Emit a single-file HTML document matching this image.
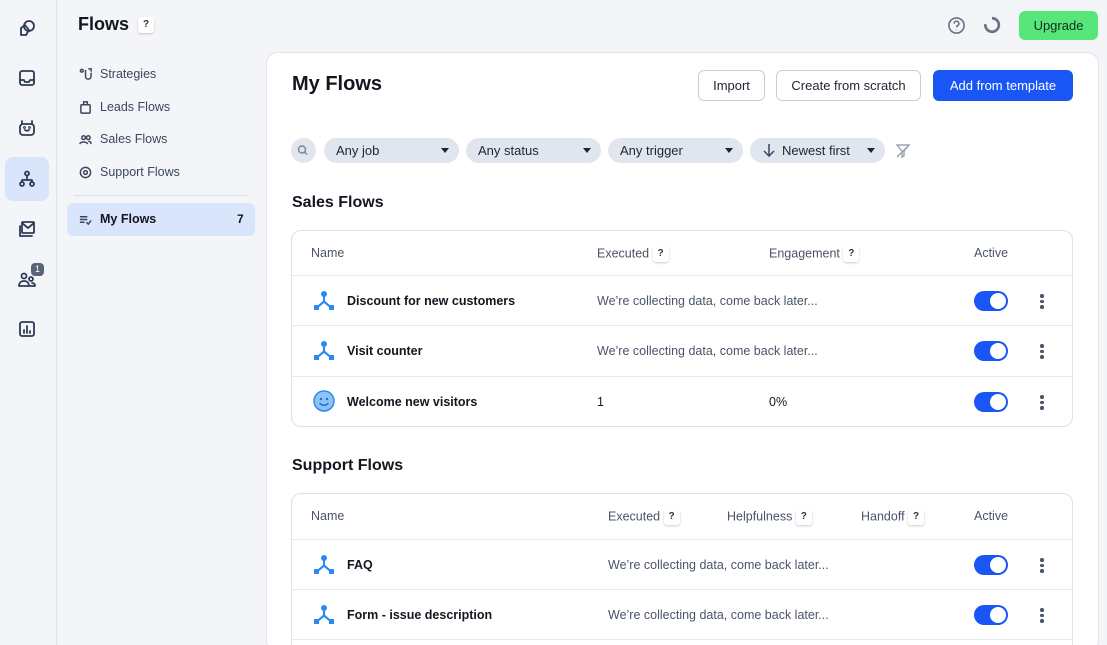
<!DOCTYPE html>
<html><head><meta charset="utf-8"><style>
*{box-sizing:border-box;margin:0;padding:0}
html,body{width:1107px;height:645px;overflow:hidden}
body{background:#f3f5f9;font-family:"Liberation Sans",sans-serif;color:#14161f;position:relative}
.rail{position:absolute;left:0;top:0;width:57px;height:645px;border-right:1px solid #dfe3ea;background:#f3f5f9}
.ri{position:absolute;left:5px;width:44px;height:44px;border-radius:8px;display:flex;align-items:center;justify-content:center}
.ri svg{width:20px;height:20px;fill:none;stroke:#2e3a55;stroke-width:1.8;stroke-linecap:round;stroke-linejoin:round}
.abs{position:absolute}
.q{display:inline-block;width:16px;height:16px;border-radius:3px;background:#fff;box-shadow:0 1px 2px rgba(0,0,0,.2);font-size:10px;text-align:center;line-height:16px;color:#333;font-weight:bold;vertical-align:middle}
.nav{position:absolute;left:79px;font-size:12.5px;color:#3c4660;display:flex;align-items:center;gap:8px}
.nav svg{width:13px;height:13px;fill:none;stroke:#3c4660;stroke-width:1.6}
.card{position:absolute;left:266px;top:52px;width:833px;height:600px;background:#fff;border:1px solid #e1e5ec;border-radius:12px}
.btn{position:absolute;top:70px;height:31px;border:1px solid #c9ced8;border-radius:6px;background:#fff;font-size:13px;line-height:29px;text-align:center;color:#1e2433}
.pill{position:absolute;top:138px;height:25px;border-radius:13px;background:#e1e6ee;font-size:13px;line-height:25px;color:#1e2433;padding-left:12px}
.pill:after{content:"";position:absolute;right:10px;top:10px;border-left:4.5px solid transparent;border-right:4.5px solid transparent;border-top:5px solid #1e2433}
.tbl{position:absolute;left:291px;width:782px;border:1px solid #dde1e8;border-radius:10px}
.th{position:absolute;font-size:12.5px;color:#4a5468}
.row{position:absolute;left:0;width:100%;border-top:1px solid #e6e9ef}
.nm{position:absolute;left:55px;font-size:12.5px;font-weight:bold;color:#14161f}
.cd{position:absolute;font-size:12.5px;color:#4a5468}
.tg{position:absolute;left:682px;width:34px;height:20px;border-radius:10px;background:#1a56f5}
.tg:after{content:"";position:absolute;right:2px;top:2px;width:16px;height:16px;border-radius:50%;background:#fff}
.dots{position:absolute;left:748px;width:4px}
.dots i{display:block;width:3.5px;height:3.5px;border-radius:50%;background:#4a5468;margin-bottom:2px}
.fi{position:absolute;left:21px;width:22px;height:22px}
</style></head><body>
<div class="rail">
 <div class="ri" style="top:6px"><svg viewBox="0 0 20 20"><circle cx="12" cy="8" r="5"/><path d="M4 10l4-3 4 5-3 5H4z"/></svg></div>
 <div class="ri" style="top:56px"><svg viewBox="0 0 20 20"><rect x="3" y="3" width="14" height="14" rx="2"/><path d="M3 12h4l1 2h4l1-2h4"/></svg></div>
 <div class="ri" style="top:106px"><svg viewBox="0 0 20 20"><rect x="3" y="6" width="14" height="11" rx="3"/><path d="M5 3v3M15 3v3M8 12c1 1 3 1 4 0"/><circle cx="7.5" cy="9.5" r=".5"/><circle cx="12.5" cy="9.5" r=".5"/></svg></div>
 <div class="ri" style="top:157px;background:#d9e5fb"><svg viewBox="0 0 20 20"><circle cx="10" cy="4.5" r="2"/><circle cx="5" cy="15" r="2"/><circle cx="15" cy="15" r="2"/><path d="M10 6.5v3M5 13v-2h10v2"/></svg></div>
 <div class="ri" style="top:207px"><svg viewBox="0 0 20 20"><rect x="5" y="3" width="12" height="11" rx="1"/><path d="M5 4l6 5 6-5M3 7v10h12"/></svg></div>
 <div class="ri" style="top:257px"><svg viewBox="0 0 20 20"><circle cx="7" cy="7" r="2.5"/><circle cx="14" cy="10" r="2"/><path d="M2 17c0-3 2-5 5-5s5 2 5 5zM13 17h5c0-2-1-3-3-3"/></svg></div>
 <div class="abs" style="left:31px;top:263px;width:13px;height:13px;border-radius:4px;background:#5a6478;color:#fff;font-size:9px;text-align:center;line-height:13px">1</div>
 <div class="ri" style="top:307px"><svg viewBox="0 0 20 20"><rect x="3" y="3" width="14" height="14" rx="2"/><path d="M7 14v-3M10 14V7M13 14v-2"/></svg></div>
</div>
<div class="abs" style="left:78px;top:14px;font-size:18px;font-weight:bold">Flows <span class="q" style="margin-left:4px">?</span></div>
<div class="nav" style="top:67px"><svg viewBox="0 0 14 14"><circle cx="3" cy="3" r="1.5"/><path d="M7 2v7a3 3 0 0 0 6 0V5M10 1h3v3"/></svg>Strategies</div>
<div class="nav" style="top:100px"><svg viewBox="0 0 14 14"><rect x="2" y="4" width="10" height="9" rx="1"/><path d="M5 4V1h4v3"/></svg>Leads Flows</div>
<div class="nav" style="top:132px"><svg viewBox="0 0 14 14"><circle cx="5" cy="5" r="2"/><circle cx="10" cy="5" r="2"/><path d="M1 12c0-3 8-3 8 0M10 9c2 0 3 1 3 3"/></svg>Sales Flows</div>
<div class="nav" style="top:165px"><svg viewBox="0 0 14 14"><circle cx="7" cy="7" r="5.5"/><circle cx="7" cy="7" r="2"/></svg>Support Flows</div>
<div class="abs" style="left:74px;top:195px;width:174px;height:1px;background:#dde1e8"></div>
<div class="abs" style="left:67px;top:203px;width:188px;height:33px;border-radius:6px;background:#d9e5fb"></div>
<div class="nav" style="top:212px;font-weight:bold;color:#14161f"><svg viewBox="0 0 14 14"><path d="M1 4h8M1 7h8M1 10h5M8 10l2 2 3-4"/></svg>My Flows</div>
<div class="abs" style="left:237px;top:212px;font-size:12px;font-weight:bold">7</div>
<svg class="abs" style="left:947px;top:16px" width="19" height="19" viewBox="0 0 20 20" fill="none" stroke="#6a7386" stroke-width="1.7"><circle cx="10" cy="10" r="8"/><path d="M7.5 8a2.5 2.5 0 1 1 3 2.4V12M10 14.5v.5"/></svg>
<svg class="abs" style="left:983px;top:16px" width="18" height="18" viewBox="0 0 20 20" fill="none" stroke="#6a7386" stroke-width="3"><path d="M10 2.5a7.5 7.5 0 1 1-7 5" stroke-dasharray="36 3 3 3"/></svg>
<div class="abs" style="left:1019px;top:11px;width:79px;height:29px;border-radius:6px;background:#56e67a;font-size:13px;text-align:center;line-height:29px;color:#10301a">Upgrade</div>
<div class="card"></div>
<div class="abs" style="left:292px;top:73px;font-size:20px;font-weight:bold">My Flows</div>
<div class="btn" style="left:698px;width:67px">Import</div>
<div class="btn" style="left:776px;width:145px">Create from scratch</div>
<div class="btn" style="left:933px;width:140px;background:#1a56f5;border-color:#1a56f5;color:#fff">Add from template</div>
<div class="abs" style="left:291px;top:138px;width:25px;height:25px;border-radius:13px;background:#e1e6ee"><svg width="25" height="25" viewBox="0 0 25 25" fill="none" stroke="#7a8396" stroke-width="1.4"><circle cx="11" cy="11.5" r="3.5"/><path d="M13.5 14l2.5 2.5"/></svg></div>
<div class="pill" style="left:324px;width:135px">Any job</div>
<div class="pill" style="left:466px;width:135px">Any status</div>
<div class="pill" style="left:608px;width:135px">Any trigger</div>
<div class="pill" style="left:750px;width:135px;padding-left:32px">Newest first<svg class="abs" style="left:12px;top:5px" width="14" height="14" viewBox="0 0 14 14" fill="none" stroke="#3c4660" stroke-width="1.5"><path d="M7 1v12M2 8l5 5 5-5"/></svg></div>
<svg class="abs" style="left:895px;top:143px" width="16" height="16" viewBox="0 0 16 16" fill="none" stroke="#9aa2b2" stroke-width="1.4"><path d="M2 2h12L9 8v5l-2 1V8zM2 14L14 2"/></svg>
<div class="abs" style="left:292px;top:194px;font-size:16px;font-weight:bold">Sales Flows</div>
<div class="tbl" style="top:230px;height:197px">
 <div class="th" style="left:19px;top:15px">Name</div>
 <div class="th" style="left:305px;top:15px">Executed <span class="q">?</span></div>
 <div class="th" style="left:477px;top:15px">Engagement <span class="q">?</span></div>
 <div class="th" style="left:682px;top:15px">Active</div>
 <div class="row" style="top:44px;height:50px">
  <svg class="fi" style="top:14px" viewBox="0 0 22 22" fill="#2a8af0"><circle cx="11" cy="4" r="3"/><path d="M10 6h2v5l6 5-1.5 1.5L11 13l-5.5 4.5L4 16l6-5z"/><rect x="1" y="15" width="5" height="5"/><rect x="16" y="15" width="5" height="5"/></svg>
  <div class="nm" style="top:18px">Discount for new customers</div>
  <div class="cd" style="left:305px;top:18px">We’re collecting data, come back later...</div>
  <div class="tg" style="top:15px"></div><div class="dots" style="top:18px"><i></i><i></i><i></i></div>
 </div>
 <div class="row" style="top:94px;height:51px">
  <svg class="fi" style="top:14px" viewBox="0 0 22 22" fill="#2a8af0"><circle cx="11" cy="4" r="3"/><path d="M10 6h2v5l6 5-1.5 1.5L11 13l-5.5 4.5L4 16l6-5z"/><rect x="1" y="15" width="5" height="5"/><rect x="16" y="15" width="5" height="5"/></svg>
  <div class="nm" style="top:18px">Visit counter</div>
  <div class="cd" style="left:305px;top:18px">We’re collecting data, come back later...</div>
  <div class="tg" style="top:15px"></div><div class="dots" style="top:18px"><i></i><i></i><i></i></div>
 </div>
 <div class="row" style="top:145px;height:51px">
  <svg class="fi" style="top:13px" viewBox="0 0 22 22"><circle cx="11" cy="11" r="10" fill="#8cc4f8" stroke="#2a8af0" stroke-width="1.5"/><circle cx="8" cy="9" r="1.2" fill="#2a6ad0"/><circle cx="14" cy="9" r="1.2" fill="#2a6ad0"/><path d="M6.5 13c2.5 3 6.5 3 9 0" fill="none" stroke="#2a6ad0" stroke-width="1.4"/></svg>
  <div class="nm" style="top:18px">Welcome new visitors</div>
  <div class="cd" style="left:305px;top:18px;color:#14161f">1</div>
  <div class="cd" style="left:477px;top:18px;color:#14161f">0%</div>
  <div class="tg" style="top:15px"></div><div class="dots" style="top:18px"><i></i><i></i><i></i></div>
 </div>
</div>
<div class="abs" style="left:292px;top:457px;font-size:16px;font-weight:bold">Support Flows</div>
<div class="tbl" style="top:493px;height:200px">
 <div class="th" style="left:19px;top:15px">Name</div>
 <div class="th" style="left:316px;top:15px">Executed <span class="q">?</span></div>
 <div class="th" style="left:435px;top:15px">Helpfulness <span class="q">?</span></div>
 <div class="th" style="left:569px;top:15px">Handoff <span class="q">?</span></div>
 <div class="th" style="left:682px;top:15px">Active</div>
 <div class="row" style="top:45px;height:50px">
  <svg class="fi" style="top:14px" viewBox="0 0 22 22" fill="#2a8af0"><circle cx="11" cy="4" r="3"/><path d="M10 6h2v5l6 5-1.5 1.5L11 13l-5.5 4.5L4 16l6-5z"/><rect x="1" y="15" width="5" height="5"/><rect x="16" y="15" width="5" height="5"/></svg>
  <div class="nm" style="top:18px">FAQ</div>
  <div class="cd" style="left:316px;top:18px">We’re collecting data, come back later...</div>
  <div class="tg" style="top:15px"></div><div class="dots" style="top:18px"><i></i><i></i><i></i></div>
 </div>
 <div class="row" style="top:95px;height:51px">
  <svg class="fi" style="top:14px" viewBox="0 0 22 22" fill="#2a8af0"><circle cx="11" cy="4" r="3"/><path d="M10 6h2v5l6 5-1.5 1.5L11 13l-5.5 4.5L4 16l6-5z"/><rect x="1" y="15" width="5" height="5"/><rect x="16" y="15" width="5" height="5"/></svg>
  <div class="nm" style="top:18px">Form - issue description</div>
  <div class="cd" style="left:316px;top:18px">We’re collecting data, come back later...</div>
  <div class="tg" style="top:15px"></div><div class="dots" style="top:18px"><i></i><i></i><i></i></div>
 </div>
 <div class="row" style="top:145px;height:20px"></div>
</div>
</body></html>
